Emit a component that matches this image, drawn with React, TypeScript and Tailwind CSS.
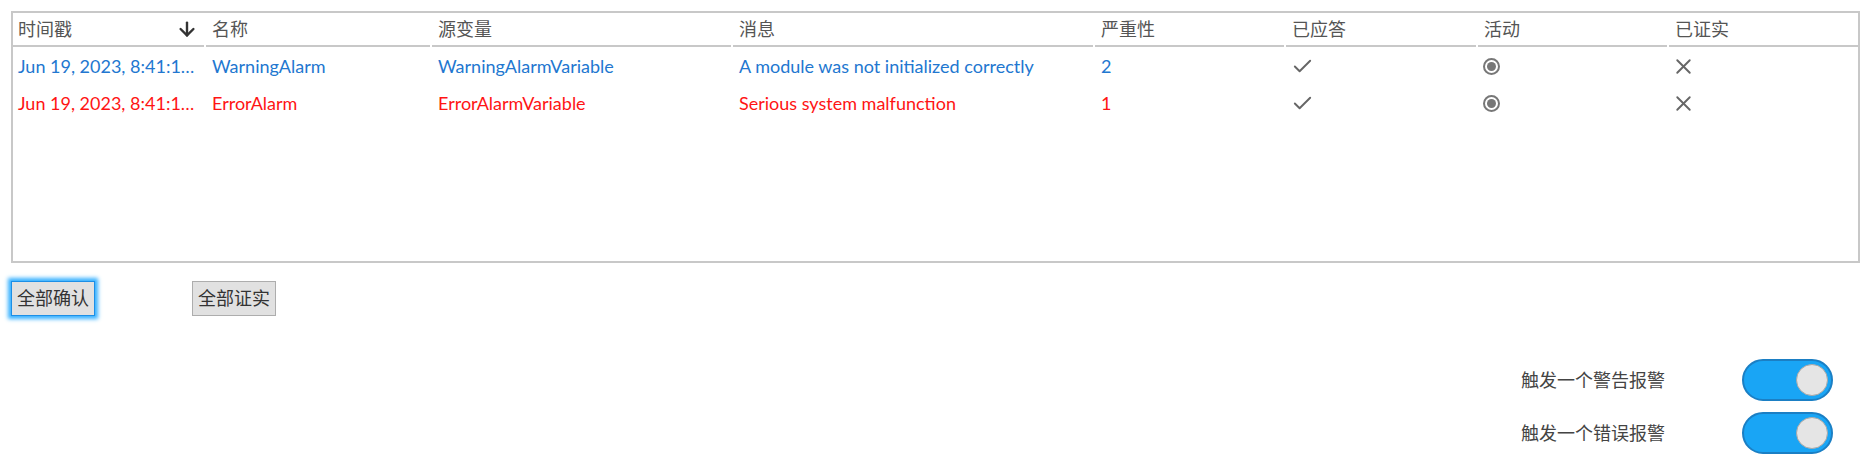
import { ArrowDown, Check, X } from 'lucide-react'

const rows = [
  {
    time: 'Jun 19, 2023, 8:41:14 AM',
    name: 'WarningAlarm',
    source: 'WarningAlarmVariable',
    message: 'A module was not initialized correctly',
    severity: '2',
    color: 'text-[#2277d0]',
  },
  {
    time: 'Jun 19, 2023, 8:41:14 AM',
    name: 'ErrorAlarm',
    source: 'ErrorAlarmVariable',
    message: 'Serious system malfunction',
    severity: '1',
    color: 'text-[#ff1414]',
  },
]

const headers = ['名称', '源变量', '消息', '严重性', '已应答', '活动', '已证实']

const cols = 'grid grid-cols-[193px_226px_301px_362px_191px_192px_191px_1fr]'

function Radio() {
  return (
    <span className="flex h-[17px] w-[17px] items-center justify-center rounded-full border-2 border-[#777]">
      <span className="h-[9px] w-[9px] rounded-full bg-[#777]" />
    </span>
  )
}

function Toggle() {
  return (
    <button className="flex h-[42px] w-[91px] items-center justify-end rounded-full border-2 border-[#1b7fc4] bg-[#19a5f5] pr-[3px]">
      <span className="h-[32px] w-[32px] rounded-full border border-[#a8a8a8] bg-[#e5e5e5]" />
    </button>
  )
}

export default function App() {
  return (
    <div className="min-h-[464px] bg-white font-['Lato','Noto_Sans_CJK_SC',sans-serif] text-[18px]">
      <div className="px-[11px] pt-[11px]">
        {/* Alarm table */}
        <div className="h-[252px] border-2 border-[#c8c8c8] bg-white">
          <div className={cols}>
            <div className="pr-[2px]">
              <div className="flex h-[34px] items-center justify-between border-b-2 border-[#c8c8c8] pl-[5px] pr-[6px] text-[#555]">
                <span>时间戳</span>
                <ArrowDown size={22} strokeWidth={2.6} className="text-[#333]" />
              </div>
            </div>
            {headers.map((h, i) => (
              <div key={h} className={i === headers.length - 1 ? '' : 'pr-[2px]'}>
                <div className="flex h-[34px] items-center border-b-2 border-[#c8c8c8] pl-[6px] text-[#555]">
                  {h}
                </div>
              </div>
            ))}
          </div>

          {rows.map((r) => (
            <div key={r.name} className={`${cols} h-[37px] items-center pt-[2px] ${r.color}`}>
              <div className="truncate pl-[5px] pr-[7px]">{r.time}</div>
              <div className="truncate pl-[6px]">{r.name}</div>
              <div className="truncate pl-[6px]">{r.source}</div>
              <div className="truncate pl-[6px]">{r.message}</div>
              <div className="pl-[6px]">{r.severity}</div>
              <div className="pl-[5px] text-[#666]">
                <Check size={23} strokeWidth={2} />
              </div>
              <div className="pl-[5px]">
                <Radio />
              </div>
              <div className="pl-[2px] text-[#666]">
                <X size={25} strokeWidth={1.8} />
              </div>
            </div>
          ))}
        </div>

        {/* Buttons */}
        <div className="mt-[18px] flex gap-[97px]">
          <button className="h-[35px] w-[84px] border border-[#1d8fe6] bg-[#e1e1e1] text-[#333] shadow-[0_0_4px_3px_#36b1ff]">
            全部确认
          </button>
          <button className="h-[35px] w-[84px] border border-[#adadad] bg-[#e1e1e1] text-[#333]">
            全部证实
          </button>
        </div>
      </div>

      {/* Alarm triggers */}
      <div className="mt-[43px] flex flex-col items-end gap-[11px] pr-[38px]">
        <div className="flex items-center gap-[77px]">
          <span className="text-[18px] text-[#444]">触发一个警告报警</span>
          <Toggle />
        </div>
        <div className="flex items-center gap-[77px]">
          <span className="text-[18px] text-[#444]">触发一个错误报警</span>
          <Toggle />
        </div>
      </div>
    </div>
  )
}
